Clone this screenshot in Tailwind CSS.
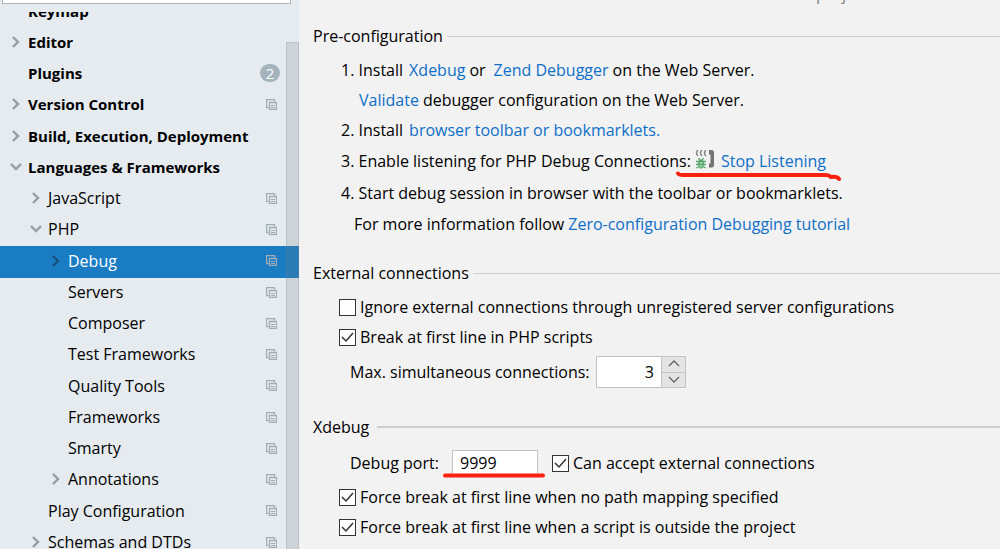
<!DOCTYPE html>
<html lang="en">
<head>
  <meta charset="UTF-8">
  <meta name="viewport" content="width=device-width, initial-scale=1.0">
  <title>Settings · Debug</title>
  <script src="https://cdn.jsdelivr.net/npm/@tailwindcss/browser@4"></script>
</head>
<body class="bg-[#f2f2f2] text-black text-base leading-6 font-['Open_Sans','Noto_Sans',sans-serif]">
  <div class="flex h-screen overflow-hidden">

    <!-- Sidebar -->
    <aside class="relative flex flex-col shrink-0 w-[299px] bg-[#e5ebef]">
      <div class="flex items-end h-3 pl-[2px] pr-2 pb-2 overflow-hidden shrink-0">
        <input type="search" aria-label="Search settings" class="w-full h-8 shrink-0 bg-white border border-[#b4b4b4] outline-none">
      </div>
      <nav class="flex-1 overflow-hidden">
        <ul id="tree" class="-mt-4"></ul>
      </nav>
      <!-- Scrollbar thumb -->
      <div class="absolute right-0 top-[42px] bottom-0 w-[13px] bg-[#73737d]/20 border border-b-0 border-[#82828c]/20"></div>
    </aside>

    <!-- Settings page -->
    <main class="relative flex-1 min-w-0 pl-[14px] whitespace-nowrap">
      <div class="h-6 overflow-hidden">
        <p class="-mt-[18px] ml-[503px] text-[#808080]">project</p>
      </div>

      <section>
        <div class="flex items-center gap-1 h-6 mb-[7px]">
          <h2>Pre-configuration</h2>
          <hr class="flex-1 border-[#cdcdcd]">
        </div>
        <div class="pl-7">
          <p class="flex items-center h-[30px]"><span class="mr-1.5">1. Install</span><a href="#" class="text-[#0e6fc8] mr-1">Xdebug</a><span class="mr-2">or</span><a href="#" class="text-[#0e6fc8] mr-1">Zend Debugger</a><span>on the Web Server.</span></p>
          <p class="flex items-center h-[30px] pl-[18px]"><a href="#" class="text-[#0e6fc8] mr-1">Validate</a><span>debugger configuration on the Web Server.</span></p>
          <p class="flex items-center h-[30px]"><span class="mr-1.5">2. Install</span><a href="#" class="text-[#0e6fc8]">browser toolbar or bookmarklets.</a></p>
          <p class="flex items-center h-8"><span class="mr-1">3. Enable listening for PHP Debug Connections:</span>
            <svg class="w-5 h-[22px] mr-1.5 shrink-0" viewBox="0 0 20 22" fill="none">
              <path d="M3 0Q0 3 3 6M7 0Q4 3 7 6M11 0Q8 3 11 6" stroke="#808080" stroke-width="1.400"/>
              <path d="M14 0h2.500q2.500 0 2.500 2.500v12.500q0 2.500-2.500 2.500H14v-4h1.500v-9H14z" fill="#737373"/>
              <path d="M5 9.500h2q2 1 2 4t-2 5H5q-2-2-2-5t2-4z" fill="#55a66a"/>
              <path d="M3.500 8l1.500 2.500M8.500 8L7 10.500M1 11.500h10M1 14.500h10M1.500 18l2.500-1.500M10.500 18L8 16.500" stroke="#55a66a" stroke-width="1.400"/>
              <path d="M4.500 13h3M4.500 16h3" stroke="#dcefe0"/>
            </svg>
            <a href="#" class="text-[#0e6fc8]">Stop Listening</a></p>
          <p class="flex items-center h-8">4. Start debug session in browser with the toolbar or bookmarklets.</p>
          <p class="flex items-center h-[30px] pl-[13px]"><span class="mr-1">For more information follow</span><a href="#" class="text-[#0e6fc8]">Zero-configuration Debugging tutorial</a></p>
        </div>
      </section>

      <section class="mt-[22px]">
        <div class="flex items-center gap-1 h-6 mb-[7px]">
          <h2>External connections</h2>
          <hr class="flex-1 border-[#cdcdcd]">
        </div>
        <div class="pl-[26px]">
          <label class="flex items-center gap-1 h-[30px]">
            <span class="grid shrink-0"><input type="checkbox" class="peer appearance-none col-start-1 row-start-1 size-[17px] bg-white border border-[#333]"><svg class="hidden peer-checked:block col-start-1 row-start-1 size-[17px] pointer-events-none" viewBox="0 0 17 17" fill="none"><path d="M3 8l4 4 7-8" stroke="#333" stroke-width="1.500"/></svg></span>
            Ignore external connections through unregistered server configurations
          </label>
          <label class="flex items-center gap-1 h-[30px]">
            <span class="grid shrink-0"><input type="checkbox" checked class="peer appearance-none col-start-1 row-start-1 size-[17px] bg-white border border-[#333]"><svg class="hidden peer-checked:block col-start-1 row-start-1 size-[17px] pointer-events-none" viewBox="0 0 17 17" fill="none"><path d="M3 8l4 4 7-8" stroke="#333" stroke-width="1.500"/></svg></span>
            Break at first line in PHP scripts
          </label>
          <div class="flex items-center h-8 mt-1 pl-[11px]">
            <label for="maxConnections" class="w-[246px]">Max. simultaneous connections:</label>
            <div class="flex h-8 w-[90px] border border-[#c3c3c3] bg-white">
              <input id="maxConnections" type="text" inputmode="numeric" value="3" class="flex-1 min-w-0 pr-[7px] text-right outline-none">
              <div class="flex flex-col w-6 bg-[#e4e4e4] border-l border-[#c3c3c3]">
                <button type="button" aria-label="Increase" class="flex-1 flex items-center justify-center border-b border-[#c3c3c3]"><svg class="w-3 h-2" viewBox="0 0 12 8" fill="none"><path d="M1 6l5-5 5 5" stroke="#606060" stroke-width="1.300"/></svg></button>
                <button type="button" aria-label="Decrease" class="flex-1 flex items-center justify-center"><svg class="w-3 h-2" viewBox="0 0 12 8" fill="none"><path d="M1 1l5 5 5-5" stroke="#606060" stroke-width="1.300"/></svg></button>
              </div>
            </div>
          </div>
        </div>
      </section>

      <section class="mt-[27px]">
        <div class="flex items-center gap-2 h-6 mb-[9px]">
          <h2>Xdebug</h2>
          <hr class="flex-1 border-t-2 border-[#cdcdcd]">
        </div>
        <div class="pl-[26px]">
          <div class="flex items-center h-[30px] mb-1 pl-[11px]">
            <label for="debugPort" class="w-[102px]">Debug port:</label>
            <input id="debugPort" type="text" value="9999" class="w-[86px] h-[26px] mr-[14px] px-[7px] bg-white border border-[#c3c3c3] outline-none">
            <label class="flex items-center gap-1">
              <span class="grid shrink-0"><input type="checkbox" checked class="peer appearance-none col-start-1 row-start-1 size-[17px] bg-white border border-[#333]"><svg class="hidden peer-checked:block col-start-1 row-start-1 size-[17px] pointer-events-none" viewBox="0 0 17 17" fill="none"><path d="M3 8l4 4 7-8" stroke="#333" stroke-width="1.500"/></svg></span>
              Can accept external connections
            </label>
          </div>
          <label class="flex items-center gap-1 h-[30px]">
            <span class="grid shrink-0"><input type="checkbox" checked class="peer appearance-none col-start-1 row-start-1 size-[17px] bg-white border border-[#333]"><svg class="hidden peer-checked:block col-start-1 row-start-1 size-[17px] pointer-events-none" viewBox="0 0 17 17" fill="none"><path d="M3 8l4 4 7-8" stroke="#333" stroke-width="1.500"/></svg></span>
            Force break at first line when no path mapping specified
          </label>
          <label class="flex items-center gap-1 h-[30px]">
            <span class="grid shrink-0"><input type="checkbox" checked class="peer appearance-none col-start-1 row-start-1 size-[17px] bg-white border border-[#333]"><svg class="hidden peer-checked:block col-start-1 row-start-1 size-[17px] pointer-events-none" viewBox="0 0 17 17" fill="none"><path d="M3 8l4 4 7-8" stroke="#333" stroke-width="1.500"/></svg></span>
            Force break at first line when a script is outside the project
          </label>
        </div>
      </section>

      <!-- Red marker strokes -->
      <svg class="absolute left-[375px] top-[170px] w-[168px] h-3 pointer-events-none" viewBox="0 0 168 12" fill="none">
        <path d="M4 3.500Q5 5 9 5H152Q155 5 157 7Q163 6 165 9" stroke="#ff2010" stroke-width="4" stroke-linecap="round"/>
      </svg>
      <svg class="absolute left-[144px] top-[472px] w-[104px] h-2 pointer-events-none" viewBox="0 0 104 8" fill="none">
        <path d="M2 3.500H100" stroke="#ff2010" stroke-width="4" stroke-linecap="round"/>
      </svg>
    </main>
  </div>

  <script>
    // level = indent, arrow = right / down, copy = per-project icon
    const items = [
      { text: 'Keymap', level: 0 },
      { text: 'Editor', level: 0, arrow: 'right' },
      { text: 'Plugins', level: 0, badge: 2 },
      { text: 'Version Control', level: 0, arrow: 'right', copy: true },
      { text: 'Build, Execution, Deployment', level: 0, arrow: 'right' },
      { text: 'Languages &amp; Frameworks', level: 0, arrow: 'down' },
      { text: 'JavaScript', level: 1, arrow: 'right', copy: true },
      { text: 'PHP', level: 1, arrow: 'down', copy: true },
      { text: 'Debug', level: 2, arrow: 'right', copy: true, selected: true },
      { text: 'Servers', level: 2, copy: true },
      { text: 'Composer', level: 2, copy: true },
      { text: 'Test Frameworks', level: 2, copy: true },
      { text: 'Quality Tools', level: 2, copy: true },
      { text: 'Frameworks', level: 2, copy: true },
      { text: 'Smarty', level: 2, copy: true },
      { text: 'Annotations', level: 2, arrow: 'right', copy: true },
      { text: 'Play Configuration', level: 1, copy: true },
      { text: 'Schemas and DTDs', level: 1, arrow: 'right', copy: true },
    ];

    const indents = ['pl-[10px] font-bold text-[15px]', 'pl-[30px]', 'pl-[50px]'];

    const arrows = {
      right: '<svg class="w-3 h-3" viewBox="0 0 12 12" fill="none"><path d="M3 1l5 5-5 5" stroke="currentColor" stroke-width="2.400"/></svg>',
      down: '<svg class="w-3 h-3" viewBox="0 0 12 12" fill="none"><path d="M1 3l5 5 5-5" stroke="currentColor" stroke-width="2.400"/></svg>',
    };

    const copyIcon = `
      <svg class="size-[11px] text-[#a0adb6]" viewBox="0 0 11 11" fill="none" stroke="currentColor">
        <path d="M2.500 8.500H.5V.5h8V2.500" stroke-width="1.400"/>
        <path d="M3.500 3.500h7v7h-7z" stroke-width="1.300"/>
        <path d="M5 6.500h4M5 8.500h4"/>
      </svg>`;

    document.getElementById('tree').innerHTML = items.map(item => `
      <li class="flex items-center h-[31px] nth-[4n+1]:h-8 pr-[22px] pb-[3px] ${indents[item.level]} ${item.selected ? 'bg-[#1a7dc4] text-white' : ''}">
        <span class="w-[18px] shrink-0">
          ${item.arrow ? `<button type="button" aria-label="Toggle" class="block ${item.selected ? 'text-[#16527f]' : 'text-[#999da0]'}">${arrows[item.arrow]}</button>` : ''}
        </span>
        <a href="#" class="flex-1 whitespace-nowrap">${item.text}</a>
        ${item.badge ? `<span class="w-5 h-[18px] -mr-[3px] rounded-full bg-[#a5b3bd] text-white text-center font-normal leading-[18px]">${item.badge}</span>` : ''}
        ${item.copy ? copyIcon : ''}
      </li>`).join('');
  </script>
</body>
</html>
